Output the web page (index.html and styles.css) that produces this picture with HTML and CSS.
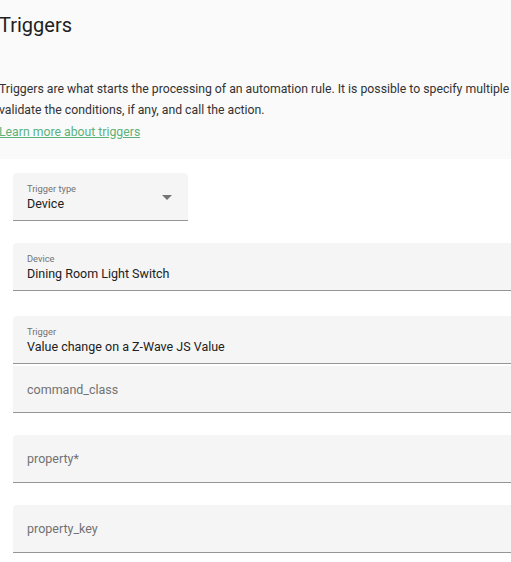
FILE: index.html
```html
<!DOCTYPE html>
<html lang="en">
<head>
  <meta charset="UTF-8">
  <meta name="viewport" content="width=device-width, initial-scale=1.0">
  <title>Triggers</title>
  <link rel="stylesheet" href="styles.css">
</head>
<body>
<div class="page">
  <section class="intro">
    <h1>Triggers</h1>
    <p class="description">
      Triggers are what starts the processing of an automation rule. It is possible to specify multiple triggers for the same rule. Once a trigger starts, Home Assistant will<br>
      validate the conditions, if any, and call the action.
    </p>
    <a class="learn-more" href="#">Learn more about triggers</a>
  </section>

  <!-- Formulario del trigger -->
  <section class="trigger-card">
    <div class="field field-select">
      <span class="field-label">Trigger type</span>
      <span class="field-value">Device</span>
      <span class="select-arrow"></span>
    </div>

    <div class="field field-device">
      <span class="field-label">Device</span>
      <span class="field-value">Dining Room Light Switch</span>
    </div>

    <div class="field field-trigger">
      <span class="field-label">Trigger</span>
      <span class="field-value">Value change on a Z-Wave JS Value</span>
    </div>

    <div class="field field-empty field-attached">
      <span class="field-placeholder">command_class</span>
    </div>

    <div class="field field-empty">
      <span class="field-placeholder">property*</span>
    </div>

    <div class="field field-empty">
      <span class="field-placeholder">property_key</span>
    </div>
  </section>
</div>
</body>
</html>
```

FILE: styles.css
```css
:root {
  --primary-text: #212121;
  --secondary-text: #727272;
  --field-bg: #f5f5f5;
  --field-line: #959595;
  --link-color: #5bb27a;
}

* {
  margin: 0;
  padding: 0;
  box-sizing: border-box;
}

body {
  font-family: Roboto, 'Noto Sans', sans-serif;
  background: #fff;
  color: var(--primary-text);
  overflow: hidden;
}

.page {
  width: 900px;
}

.intro {
  background: #fafafa;
  height: 159px;
  padding-top: 11px;
  margin-left: -1px;
}

h1 {
  font-size: 20px;
  font-weight: 400;
  line-height: 28px;
  margin-bottom: 40px;
}

.description {
  font-size: 12.25px;
  line-height: 21px;
  white-space: nowrap;
  color: #333;
}

.learn-more {
  display: inline-block;
  font-size: 12.25px;
  line-height: 21px;
  color: var(--link-color);
}

.trigger-card {
  display: flex;
  flex-direction: column;
  align-items: flex-start;
  gap: 22px;
  padding: 14px 0 0 13px;
}

.field {
  position: relative;
  width: 100%;
  height: 48px;
  background: var(--field-bg);
  border-radius: 4px 4px 0 0;
  border-bottom: 1px solid var(--field-line);
  padding: 10px 14px 0;
  display: flex;
  flex-direction: column;
}

.field-select {
  width: 175px;
}

.field-trigger {
  margin-top: 3px;
}

.field-attached {
  height: 47px;
  margin-top: -20px;
  border-radius: 0;
}

.field-label {
  font-size: 9.3px;
  line-height: 11px;
  color: var(--secondary-text);
}

.field-value {
  font-size: 12.5px;
  line-height: 18px;
  margin-top: 1px;
}

.field-empty {
  justify-content: center;
  padding-top: 0;
}

.field-placeholder {
  font-size: 12.5px;
  color: var(--secondary-text);
}

.select-arrow {
  position: absolute;
  right: 16px;
  top: 22px;
  width: 0;
  height: 0;
  border-left: 5px solid transparent;
  border-right: 5px solid transparent;
  border-top: 5px solid #757575;
}
```
